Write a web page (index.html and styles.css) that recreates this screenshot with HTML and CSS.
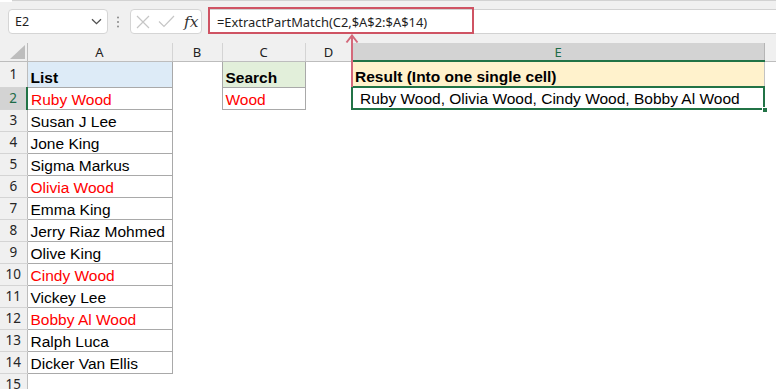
FILE: index.html
```html
<!DOCTYPE html>
<html>
<head>
<meta charset="utf-8">
<link rel="stylesheet" href="styles.css">
</head>
<body>
<div class="app">
  <div class="ribbon-edge"></div>
  <div class="fbar">
    <div class="namebox">
      <span class="nb-text">E2</span>
      <svg class="chev" width="11" height="7" viewBox="0 0 11 7"><path d="M1 1.2l4.5 4.5 4.5-4.5" stroke="#505050" stroke-width="1.3" fill="none"/></svg>
    </div>
    <div class="dots">
      <svg width="4" height="12" viewBox="0 0 4 12"><circle cx="2" cy="1.5" r="1" fill="#8a8a8a"/><circle cx="2" cy="6" r="1" fill="#8a8a8a"/><circle cx="2" cy="10.5" r="1" fill="#8a8a8a"/></svg>
    </div>
    <div class="fxbox">
      <svg class="ico" width="14" height="14" viewBox="0 0 14 14"><path d="M1 1l12 12M13 1L1 13" stroke="#c6c6c6" stroke-width="1.2" fill="none"/></svg>
      <svg class="ico" width="17" height="13" viewBox="0 0 17 13"><path d="M1 6.5l5 5L16 1" stroke="#c6c6c6" stroke-width="1.2" fill="none"/></svg>
      <span class="fx">fx</span>
    </div>
    <div class="formula"><span class="ftext">=ExtractPartMatch(C2,$A$2:$A$14)</span></div>
  </div>

  <table class="sheet">
    <colgroup>
      <col class="c-rh"><col class="c-a"><col class="c-b"><col class="c-c"><col class="c-d"><col class="c-e"><col class="c-x">
    </colgroup>
    <tr class="hdr">
      <th class="corner"><svg class="tri" width="15" height="14" viewBox="0 0 15 14"><path d="M15 0V14H0Z" fill="#bdbdbd"/></svg></th>
      <th>A</th><th>B</th><th>C</th><th>D</th><th class="sel-col">E</th><th class="hx"></th>
    </tr>
    <tr class="r1">
      <th class="rh">1</th>
      <td class="bd bold fill-blue">List</td><td></td>
      <td class="bd bold fill-green">Search</td><td></td>
      <td class="bold fill-yellow res">Result (Into one single cell)</td><td></td>
    </tr>
    <tr class="r">
      <th class="rh sel-row">2</th>
      <td class="bd red">Ruby Wood</td><td></td>
      <td class="bd red">Wood</td><td></td>
      <td class="sel-cell"><span class="pad">Ruby Wood, Olivia Wood, Cindy Wood, Bobby Al Wood</span><span class="handle"></span></td><td></td>
    </tr>
    <tr class="r"><th class="rh">3</th><td class="bd">Susan J Lee</td><td></td><td></td><td></td><td></td><td></td></tr>
    <tr class="r"><th class="rh">4</th><td class="bd">Jone King</td><td></td><td></td><td></td><td></td><td></td></tr>
    <tr class="r"><th class="rh">5</th><td class="bd">Sigma Markus</td><td></td><td></td><td></td><td></td><td></td></tr>
    <tr class="r"><th class="rh">6</th><td class="bd red">Olivia Wood</td><td></td><td></td><td></td><td></td><td></td></tr>
    <tr class="r"><th class="rh">7</th><td class="bd">Emma King</td><td></td><td></td><td></td><td></td><td></td></tr>
    <tr class="r"><th class="rh">8</th><td class="bd">Jerry Riaz Mohmed</td><td></td><td></td><td></td><td></td><td></td></tr>
    <tr class="r"><th class="rh">9</th><td class="bd">Olive King</td><td></td><td></td><td></td><td></td><td></td></tr>
    <tr class="r"><th class="rh">10</th><td class="bd red">Cindy Wood</td><td></td><td></td><td></td><td></td><td></td></tr>
    <tr class="r"><th class="rh">11</th><td class="bd">Vickey Lee</td><td></td><td></td><td></td><td></td><td></td></tr>
    <tr class="r"><th class="rh">12</th><td class="bd red">Bobby Al Wood</td><td></td><td></td><td></td><td></td><td></td></tr>
    <tr class="r"><th class="rh">13</th><td class="bd">Ralph Luca</td><td></td><td></td><td></td><td></td><td></td></tr>
    <tr class="r"><th class="rh">14</th><td class="bd">Dicker Van Ellis</td><td></td><td></td><td></td><td></td><td></td></tr>
    <tr class="r"><th class="rh">15</th><td></td><td></td><td></td><td></td><td></td><td></td></tr>
  </table>

  <div class="annot-box"></div>
  <svg class="arrow" width="14" height="54" viewBox="0 0 14 54"><path d="M7 1V53M1.5 8.5L7 1.5l5.5 7" stroke="#d4687a" stroke-width="2" fill="none"/></svg>
</div>
</body>
</html>
```

FILE: styles.css
```css
html, body {
  margin: 0;
  padding: 0;
}
body {
  width: 776px;
  height: 389px;
  overflow: hidden;
  background: #ffffff;
}
.app {
  position: relative;
  width: 776px;
  height: 389px;
  overflow: hidden;
  background: #ffffff;
}
.ribbon-edge {
  height: 2px;
  background: #f0f0f0;
  border-top: 1px solid #d2d2d2;
  margin-left: 12px;
  box-sizing: border-box;
}
.fbar {
  display: flex;
  align-items: flex-start;
  height: 41px;
  background: #f0f0f0;
  padding-top: 7px;
  box-sizing: border-box;
  font-family: "Noto Sans", "Open Sans", sans-serif;
}
.namebox {
  margin-left: 8px;
  width: 100px;
  height: 25px;
  box-sizing: border-box;
  background: #fff;
  border: 1px solid #d5d5d5;
  border-radius: 4px;
  display: flex;
  align-items: center;
  padding-left: 6px;
  padding-right: 5px;
}
.nb-text {
  flex: 1;
  font-size: 12.5px;
  color: #1f1f1f;
}
.chev {
  display: block;
}
.dots {
  width: 20px;
  height: 25px;
  display: flex;
  align-items: center;
  justify-content: center;
}
.dots svg { display: block; }
.fxbox {
  margin-left: 2px;
  width: 72px;
  height: 25px;
  box-sizing: border-box;
  background: #fff;
  border: 1px solid #d5d5d5;
  border-radius: 4px;
  display: flex;
  align-items: center;
  padding-left: 5px;
  gap: 8px;
}
.ico { display: block; }
.fx {
  font-family: "DejaVu Serif", "Liberation Serif", serif;
  font-style: italic;
  font-size: 15.5px;
  color: #333;
  margin-left: 1px;
}
.formula {
  flex: 1;
  margin-left: 6px;
  height: 25px;
  box-sizing: border-box;
  background: #fff;
  border-top: 1px solid #d2d2d2;
  border-bottom: 1px solid #d2d2d2;
  padding-left: 9px;
  display: flex;
  align-items: center;
}
.ftext {
  font-size: 12.9px;
  color: #1f1f1f;
  white-space: nowrap;
}

/* sheet */
.sheet {
  table-layout: fixed;
  border-collapse: collapse;
  width: 776px;
  font-family: "Liberation Sans", Arial, sans-serif;
  font-size: 15.5px;
  color: #000;
}
.c-rh { width: 27px; }
.c-a { width: 145px; }
.c-b { width: 50px; }
.c-c { width: 83px; }
.c-d { width: 47px; }
.c-e { width: 412px; }
.c-x { width: 12px; }

.sheet th, .sheet td {
  padding: 0;
  overflow: hidden;
  white-space: nowrap;
}
.hdr { height: 18px; }
.hdr th {
  background: #f0f0f0;
  border-right: 1px solid #d4d4d4;
  border-bottom: 1px solid #bdbdbd;
  font-family: "Noto Sans", "Open Sans", sans-serif;
  font-weight: normal;
  font-size: 13px;
  color: #222;
  text-align: center;
  vertical-align: middle;
  line-height: 16px;
}
.hdr th.corner {
  position: relative;
  border-right: 1px solid #bdbdbd;
}
.tri {
  position: absolute;
  right: 2px;
  bottom: 2px;
  display: block;
}
.hdr th.sel-col {
  background: #d3d3d3;
  color: #1d6b47;
  border-bottom: 2px solid #217346;
  border-right: 1px solid #b5b5b5;
}
.hdr th.hx {
  border-right: none;
}
.r1 { height: 26px; }
.r { height: 22px; }
.rh {
  background: #f0f0f0;
  border-right: 1px solid #bdbdbd;
  border-bottom: 1px solid #d4d4d4;
  font-family: "Noto Sans", "Open Sans", sans-serif;
  font-weight: normal;
  font-size: 13.5px;
  color: #262626;
  text-align: center;
  vertical-align: middle;
}
.rh.sel-row {
  background: #d3d3d3;
  color: #1d6b47;
  border-right: 2px solid #217346;
}
.sheet td {
  vertical-align: bottom;
  line-height: 17px;
  padding: 0 0 1px 3px;
}
.bd {
  border: 1px solid #a9a9a9;
}
.bold { font-weight: bold; }
.red { color: #ff0000; }
.fill-blue { background: #ddebf7; }
.fill-green { background: #e2efda; }
.fill-yellow { background: #fff2cc; }
.res {
  border-right: 1px solid #c3c3c3;
  padding-left: 4px;
}
.sel-cell {
  position: relative;
  border: 2px solid #217346;
  overflow: visible !important;
}
.sel-cell .pad {
  padding-left: 4px;
}
.handle {
  position: absolute;
  right: -5px;
  bottom: -5px;
  width: 6px;
  height: 6px;
  background: #217346;
  border: 1px solid #fff;
  box-sizing: border-box;
}

/* annotations */
.annot-box {
  position: absolute;
  left: 208px;
  top: 7px;
  width: 266px;
  height: 27px;
  box-sizing: border-box;
  border: 2px solid #cf5363;
}
.arrow {
  position: absolute;
  left: 345px;
  top: 34px;
  display: block;
}
```
